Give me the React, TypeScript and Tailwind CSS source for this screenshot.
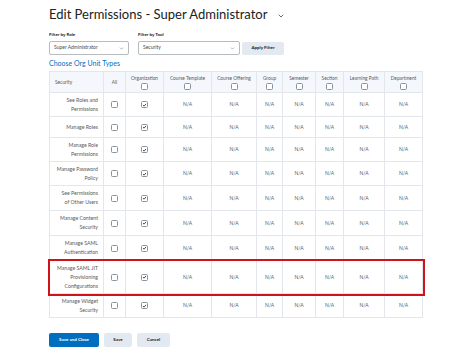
import { ChevronDown } from 'lucide-react'

const cols = [
  { label: 'Organization', w: 38 },
  { label: 'Course Template', w: 48 },
  { label: 'Course Offering', w: 45 },
  { label: 'Group', w: 26 },
  { label: 'Semester', w: 33 },
  { label: 'Section', w: 28 },
  { label: 'Learning Path', w: 41 },
  { label: 'Department', w: 38 },
]

const rows = [
  { name: ['See Roles and', 'Permissions'], h: 24 },
  { name: ['Manage Roles'], h: 21 },
  { name: ['Manage Role', 'Permissions'], h: 24 },
  { name: ['Manage Password', 'Policy'], h: 24 },
  { name: ['See Permissions', 'of Other Users'], h: 25 },
  { name: ['Manage Content', 'Security'], h: 25 },
  { name: ['Manage SAML', 'Authentication'], h: 25 },
  { name: ['Manage SAML JIT', 'Provisioning', 'Configurations'], h: 33, highlight: true },
  { name: ['Manage Widget', 'Security'], h: 24 },
]

function Box({ checked }: { checked?: boolean }) {
  return (
    <span className="inline-flex h-[7px] w-[7px] items-center justify-center rounded-[1.5px] border border-[#8a949e] bg-white align-middle">
      {checked && (
        <svg viewBox="0 0 10 10" className="h-[6px] w-[6px]">
          <path d="M2 5.2 L4.2 7.3 L8 2.8" fill="none" stroke="#202122" strokeWidth="1.6" />
        </svg>
      )}
    </span>
  )
}

export default function App() {
  return (
    <div className="h-[357px] w-[474px] bg-white pl-[49px] pt-[5px] text-[#202122]" style={{ fontFamily: 'Lato, "Noto Sans", sans-serif' }}>
      <div className="flex items-center gap-[10px]">
        <h1 className="text-[13px] leading-[18px]">Edit Permissions - Super Administrator</h1>
        <ChevronDown className="mt-[3px] h-[8px] w-[8px] text-[#494c4e]" strokeWidth={2.5} />
      </div>

      <div className="mt-[9px] flex items-end gap-[9px]">
        <div>
          <p className="text-[4.5px] font-bold leading-[6px]">Filter by Role</p>
          <div className="mt-[3px] flex h-[14px] w-[80px] items-center justify-between rounded-[2px] border border-[#b7bcc1] px-[4px] text-[#494c4e]">
            <span className="text-[5px]">Super Administrator</span>
            <ChevronDown className="h-[5px] w-[5px]" />
          </div>
        </div>
        <div className="flex items-end gap-[2px]">
          <div>
            <p className="text-[4.5px] font-bold leading-[6px]">Filter by Tool</p>
            <div className="mt-[3px] flex h-[14px] w-[102px] items-center justify-between rounded-[2px] border border-[#b7bcc1] px-[4px] text-[#494c4e]">
              <span className="text-[5px]">Security</span>
              <ChevronDown className="h-[5px] w-[5px]" />
            </div>
          </div>
          <div className="mb-[0.5px] flex h-[13px] w-[42px] items-center justify-center rounded-[2px] bg-[#e3e9f1] text-[4.5px] font-bold">
            Apply Filter
          </div>
        </div>
      </div>

      <p className="mt-[3px] text-[7px] leading-[10px] text-[#006fbf]">Choose Org Unit Types</p>

      <table className="mt-[3px] border-collapse text-[4.8px] leading-[7px] text-[#565a5c]">
        <thead>
          <tr className="h-[21px] bg-[#f4f7fc]">
            <th className="w-[54px] border border-[#e3e6ea] pl-[5px] text-left font-normal">Security</th>
            <th className="w-[22px] border border-[#e3e6ea] font-normal">All</th>
            {cols.map((c) => (
              <th key={c.label} style={{ width: c.w }} className="border border-[#e3e6ea] align-middle font-normal">
                <div className="flex flex-col items-center gap-[1px]">
                  <span className="whitespace-nowrap">{c.label}</span>
                  <Box />
                </div>
              </th>
            ))}
          </tr>
        </thead>
        <tbody>
          {rows.map((r, i) => (
            <tr key={i} style={{ height: r.h }} className={r.highlight ? 'outline-2 outline-[#d0131a]' : ''}>
              <td className="border border-[#e3e6ea] pr-[5px] text-right text-[5.2px] leading-[9px]">
                {r.name.map((n) => (
                  <div key={n} className="whitespace-nowrap">{n}</div>
                ))}
              </td>
              <td className="border border-[#e3e6ea] text-center">
                <Box />
              </td>
              {cols.map((c, j) => (
                <td key={c.label} className="border border-[#e3e6ea] text-center text-[5px] text-[#5a5e60]">
                  {j === 0 ? <Box checked /> : 'N/A'}
                </td>
              ))}
            </tr>
          ))}
        </tbody>
      </table>

      <div className="mt-[15px] flex gap-[5px] text-[4.5px] font-bold">
        <div className="flex h-[14px] w-[50px] items-center justify-center rounded-[2px] bg-[#006fbf] text-white">Save and Close</div>
        <div className="flex h-[14px] w-[28px] items-center justify-center rounded-[2px] bg-[#e3e9f1]">Save</div>
        <div className="flex h-[14px] w-[33px] items-center justify-center rounded-[2px] bg-[#e3e9f1]">Cancel</div>
      </div>
    </div>
  )
}
